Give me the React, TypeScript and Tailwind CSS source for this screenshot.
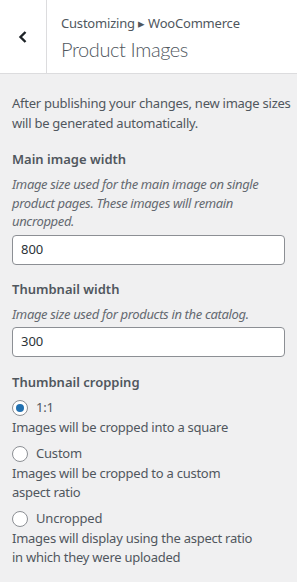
import React from "react";

const font = { fontFamily: '"Noto Sans", "Open Sans", sans-serif' };

function Radio({ checked, label }: { checked?: boolean; label: string }) {
  return (
    <div className="flex items-center h-[20px] gap-[8px]">
      <span className="w-[16px] h-[16px] rounded-full border border-[#8c8f94] bg-white flex items-center justify-center shrink-0">
        {checked && <span className="w-[8px] h-[8px] rounded-full bg-[#2271b1]" />}
      </span>
      <span className="text-[13px] text-[#50575e] tracking-[-0.2px]">{label}</span>
    </div>
  );
}

export default function App() {
  return (
    <div className="w-[297px] h-[582px] bg-[#f0f0f1] flex flex-col overflow-hidden" style={font}>
      <div className="h-[74px] bg-white border-b border-[#dcdcde] flex shrink-0">
        <div className="w-[47px] border-r border-[#dcdcde] flex items-center justify-center">
          <svg width="12" height="14" viewBox="0 0 12 14">
            <path d="M8.5 2 L3.5 7 L8.5 12" fill="none" stroke="#1d2327" strokeWidth="2.4" />
          </svg>
        </div>
        <div className="flex flex-col pl-[14px] pt-[14px]">
          <div className="text-[13px] leading-[18px] text-[#50575e] tracking-[-0.2px]">Customizing ▸ WooCommerce</div>
          <div
            className="text-[20px] leading-[28px] font-light text-[#50575e] mt-[3px] tracking-[-0.4px]"
            style={{ fontFamily: 'Lato, "Noto Sans", sans-serif' }}
          >
            Product Images
          </div>
        </div>
      </div>
      <div className="flex flex-col px-[12px] pt-[20px]">
        <p className="text-[13px] leading-[19.5px] text-[#50575e] tracking-[-0.25px] -mr-[6px]">
          After publishing your changes, new image sizes will be generated automatically.
        </p>
        <div className="mt-[16px] text-[13px] leading-[20px] font-semibold text-[#50575e]">Main image width</div>
        <p className="mt-[6px] text-[13px] leading-[18.5px] italic text-[#646970] tracking-[-0.35px]">
          Image size used for the main image on single product pages. These images will remain uncropped.
        </p>
        <div className="mt-[4px] h-[30px] bg-white border border-[#8c8f94] rounded-[4px] flex items-center px-[8px] text-[13px] text-[#2c3338]">
          800
        </div>
        <div className="mt-[14px] text-[13px] leading-[20px] font-semibold text-[#50575e]">Thumbnail width</div>
        <p className="mt-[6px] text-[13px] leading-[18.5px] italic text-[#646970] tracking-[-0.35px]">
          Image size used for products in the catalog.
        </p>
        <div className="mt-[4px] h-[30px] bg-white border border-[#8c8f94] rounded-[4px] flex items-center px-[8px] text-[13px] text-[#2c3338]">
          300
        </div>
        <div className="mt-[15px] text-[13px] leading-[20px] font-semibold text-[#50575e]">Thumbnail cropping</div>
        <div className="mt-[6px]">
          <Radio checked label="1:1" />
          <p className="text-[13px] leading-[19.5px] text-[#50575e] tracking-[-0.25px] whitespace-nowrap">Images will be cropped into a square</p>
        </div>
        <div className="mt-[6px]">
          <Radio label="Custom" />
          <p className="text-[13px] leading-[19.5px] text-[#50575e] tracking-[-0.25px] whitespace-nowrap">
            Images will be cropped to a custom
            <br />
            aspect ratio
          </p>
        </div>
        <div className="mt-[6px]">
          <Radio label="Uncropped" />
          <p className="text-[13px] leading-[19.5px] text-[#50575e] tracking-[-0.25px] whitespace-nowrap">
            Images will display using the aspect ratio
            <br />
            in which they were uploaded
          </p>
        </div>
      </div>
    </div>
  );
}
